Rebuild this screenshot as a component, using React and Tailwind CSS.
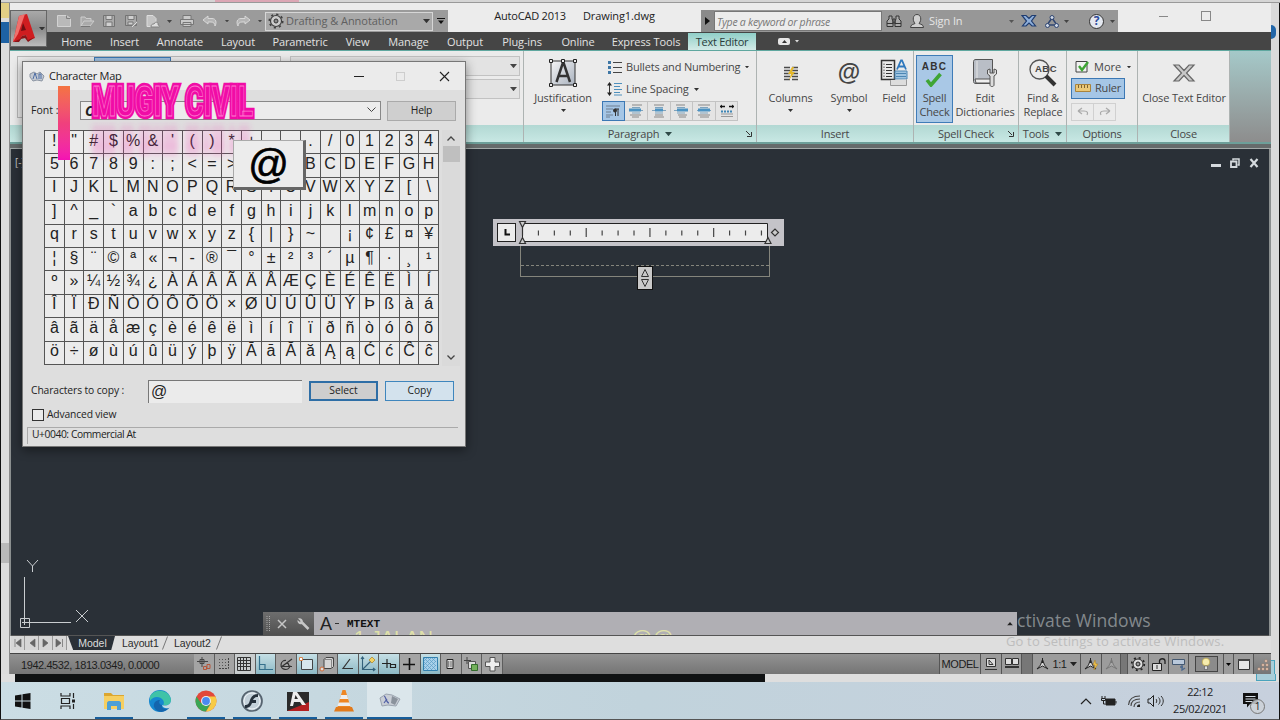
import React from "react";

const tabs = [
  { name: "Home", width: "w-[49px]" },
  { name: "Insert", width: "w-[47px]" },
  { name: "Annotate", width: "w-[64px]" },
  { name: "Layout", width: "w-[52px]" },
  { name: "Parametric", width: "w-[72px]" },
  { name: "View", width: "w-[43px]" },
  { name: "Manage", width: "w-[59px]" },
  { name: "Output", width: "w-[54px]" },
  { name: "Plug-ins", width: "w-[60px]" },
  { name: "Online", width: "w-[52px]" },
  { name: "Express Tools", width: "w-[84px]" },
];

// Printable characters in the order the character map lists them
const codes = [];
for (let i = 33; i < 127; i++) codes.push(i);
for (let i = 160; i < 266; i++) codes.push(i);
const characters = codes.map((c) => (c === 173 ? "-" : String.fromCharCode(c)));

const Icon = ({ w = 20, h = 20, className = "", children }) => (
  <svg
    width={w}
    height={h}
    viewBox={`0 0 ${w} ${h}`}
    fill="none"
    className={`shrink-0 ${className}`}
  >
    {children}
  </svg>
);

const Caret = ({ className = "text-[#444]", size = 5 }) => (
  <svg width={size} height={size * 0.6} viewBox="0 0 10 6" className={`shrink-0 ${className}`}>
    <path d="M0 0h10L5 6z" fill="currentColor" />
  </svg>
);

const Cell = ({ width, className = "", children }) => (
  <div className={`flex h-full shrink-0 items-center justify-center ${width} ${className}`}>{children}</div>
);

const QuickAccess = () => (
  <div className="flex h-[22px] w-[401px] items-center bg-[#9b9b9b] pl-[6px]">
    <Cell width="w-[22px]">
      <Icon w={16} h={14}><path d="M1.500 1.500h9l4 3v8h-13z" fill="#b9b9b9" stroke="#d2d2d2" /><path d="M10.500 1.500v3h4" stroke="#808080" /></Icon>
    </Cell>
    <Cell width="w-[23px]">
      <Icon w={16} h={14}><path d="M2 12V3h4l1 1.500h5V7M2 12l3-5h10l-4 5z" fill="#aaa" stroke="#cdcdcd" /><path d="M2 12.500h9" stroke="#777" /></Icon>
    </Cell>
    <Cell width="w-[22px]">
      <Icon w={16} h={14}><path d="M2.500 1.500h11v11h-11z" fill="#aaa" stroke="#737373" /><path d="M5 1.500h6v4H5zM5 8h6v4.500H5z" fill="#d0d0d0" stroke="#777" /></Icon>
    </Cell>
    <Cell width="w-[22px]">
      <Icon w={16} h={15}><path d="M2.500 1.500h11v10h-11z" fill="#aaa" stroke="#737373" /><path d="M5 1.500h6v4H5zM5 8h5v3H5z" fill="#d0d0d0" stroke="#777" /><path d="M8 13l6-6 1 1-6 6z" fill="#ddd" stroke="#777" strokeWidth=".5" /></Icon>
    </Cell>
    <Cell width="w-[22px]">
      <Icon w={16} h={15}><path d="M2 1.500h6l3 3v8H2z" fill="#c4c4c4" stroke="#ddd" /><path d="M6 13c0-3 2-3 3-3 1-3 5-2 4 1 2 0 2 2 1 2z" fill="#ddd" stroke="#808080" /></Icon>
    </Cell>
    <Cell width="w-[11px]"><Caret /></Cell>
    <Cell width="w-[24px]">
      <Icon w={16} h={14}><path d="M4 5V1.500h8V5M1.500 5.500h13v5h-13zM4 8.500h8v4H4z" fill="#c9c9c9" stroke="#777" /></Icon>
    </Cell>
    <Cell width="w-[22px]">
      <Icon w={16} h={13}><path d="M1 5l5-4v2.500h4c4 0 5 4 3 7.500 0-3-2-4-4-4H6V9z" fill="#b5b5b5" stroke="#ddd" strokeWidth=".9" /></Icon>
    </Cell>
    <Cell width="w-[11px]"><Caret size={4} /></Cell>
    <Cell width="w-[22px]">
      <Icon w={16} h={13}><path d="M15 5l-5-4v2.500H6C2 3.500 1 7.500 3 11c0-3 2-4 4-4h3V9z" fill="#b5b5b5" stroke="#ddd" strokeWidth=".9" /></Icon>
    </Cell>
    <Cell width="w-[11px]"><Caret size={4} /></Cell>
    <div className="flex h-[19px] w-[168px] items-center border border-[#d6d6d6] bg-[#a9a9a9] px-[2px]">
      <Icon w={16} h={16}>
        <circle cx="8" cy="8" r="5.500" fill="#ccc" stroke="#3f3f3f" strokeWidth="1.200" />
        <circle cx="8" cy="8" r="6.800" stroke="#3f3f3f" strokeWidth="1.500" strokeDasharray="2.200 3.140" />
        <circle cx="8" cy="8" r="2" fill="#8b8b8b" stroke="#333" />
      </Icon>
      <span className="ml-[2px] text-[11px] tracking-[-0.04px] text-[#606060]">Drafting &amp; Annotation</span>
      <div className="grow" />
      <Caret size={7} className="text-[#333]" />
    </div>
    <Cell width="w-[15px]">
      <Icon w={8} h={8}><path d="M0 1.500h8" stroke="#111" /><path d="M1 3.500h6L4 7z" fill="#111" /></Icon>
    </Cell>
  </div>
);

const InfoCenter = () => (
  <div className="flex h-[22px] w-[417px] items-center bg-[#979797]">
    <Cell width="w-[13px]" className="bg-[#8a8a8a]">
      <Icon w={5} h={8}><path d="M0 0l5 4-5 4z" fill="#111" /></Icon>
    </Cell>
    <div className="flex h-[20px] w-[168px] items-center border border-[#777] bg-[#ececec] pl-[2px] pt-[3px]">
      <span className="whitespace-nowrap text-[10.500px] italic tracking-[-0.250px] text-[#777]">Type a keyword or phrase</span>
    </div>
    <Cell width="w-[24px]">
      <Icon w={16} h={16}><path d="M3 3h3v3l1 2v5.500H1V8l2-2zM10 3h3v3l2 2v5.500H9V8l1-2zM7 6h2v4H7z" fill="#aaa" stroke="#333" /><path d="M1 10.500h6M9 10.500h6" stroke="#333" /></Icon>
    </Cell>
    <Cell width="w-[21px]">
      <Icon w={16} h={16}><path d="M1.500 14.500c0-3 3-3 4.500-4C3 7 4 1.500 8 1.500S13 7 10 10.500c2 1 4.500 1 4.500 4z" fill="#d0d0d0" stroke="#444" /></Icon>
    </Cell>
    <span className="ml-[2px] w-[76px] text-[11px] tracking-[-0.1px] text-[#e6e6e6]">Sign In</span>
    <Cell width="w-[12px]"><Caret size={5} className="text-[#555]" /></Cell>
    <Cell width="w-[24px]">
      <Icon w={16} h={14}><path d="M1 1.500h4l3 3 3-3h3.500L10.500 7l4 5H11L8 9l-3 3H1.500l4-5z" fill="#8fb0db" stroke="#1f3c70" strokeWidth="1.200" /></Icon>
    </Cell>
    <Cell width="w-[21px]">
      <Icon w={16} h={15}><path d="M8 4l-5 7h10z" stroke="#2f4571" strokeWidth="1.500" /><circle cx="8" cy="3.500" r="2" fill="#cfd8e6" stroke="#2f4571" /><circle cx="3.500" cy="11.500" r="2" fill="#cfd8e6" stroke="#2f4571" /><circle cx="12.500" cy="11.500" r="2" fill="#cfd8e6" stroke="#2f4571" /></Icon>
    </Cell>
    <Cell width="w-[9px]"><Caret size={5} className="text-[#444]" /></Cell>
    <Cell width="w-[46px]" className="pl-[16px]">
      <div className="flex size-[15px] shrink-0 items-center justify-center rounded-full border border-[#333] bg-[#e4e8f0] text-[12px] font-bold leading-none text-[#2b4a9b]">?</div>
      <Caret size={5} className="ml-[6px] text-[#444]" />
    </Cell>
  </div>
);

const TitleBar = () => (
  <div className="flex h-[29px] bg-[#ececec] pt-[7px]">
    <div className="w-[37px]" />
    <QuickAccess />
    <div className="flex w-[253px] items-center justify-center gap-[17px] pb-[9px] text-[11px] text-[#222]">
      <span className="tracking-[-0.2px]">AutoCAD 2013</span>
      <span className="tracking-[-0.1px]">Drawing1.dwg</span>
    </div>
    <InfoCenter />
    <div className="ml-[41px] mt-[6px] h-px w-[9px] bg-[#888]" />
    <div className="ml-[33px] mt-[1px] size-[10px] border border-[#888]" />
  </div>
);

const MenuTabs = () => (
  <div className="flex h-[18px] items-end bg-[#454545] pl-[42px] text-[11px] tracking-[-0.1px] text-[#e2e2e2]">
    {tabs.map((tab) => (
      <div key={tab.name} className={`flex h-[16px] shrink-0 items-center justify-center whitespace-nowrap ${tab.width}`}>{tab.name}</div>
    ))}
    <div className="flex h-[17px] w-[68px] shrink-0 items-center justify-center whitespace-nowrap bg-gradient-to-b from-[#8fcfc8] to-[#d3eae7] pt-[1px] tracking-[-0.250px] text-[#2c3c3b]">Text Editor</div>
    <div className="ml-[22px] flex h-[17px] items-center gap-[5px]">
      <div className="flex h-[7px] w-[12px] items-center justify-center rounded-[2px] bg-[#e6e6e6]"><Caret size={5} className="rotate-180 text-[#333]" /></div>
      <Caret size={4} className="text-[#ddd]" />
    </div>
  </div>
);

const Panel = ({ title, width, arrow, launcher, children }) => (
  <div className={`flex shrink-0 flex-col border-r border-[#adb3b2] ${width}`}>
    <div className="flex h-[74px] bg-[#ebebeb]">{children}</div>
    <div className="flex h-[17px] items-center bg-gradient-to-b from-[#b2d8d3] to-[#c8e8e4] pt-[1px]">
      <div className={launcher || !arrow ? "w-[10px]" : "w-[4px]"} />
      <div className="flex grow items-center justify-center gap-[6px] whitespace-nowrap tracking-[-0.2px]">
        {title}
        {arrow && <Caret size={7} className="text-[#2f4a48]" />}
      </div>
      <div className={launcher || !arrow ? "w-[10px]" : "w-[4px]"}>
        {launcher && <Icon w={6} h={6}><path d="M0 0l4 4M5.500 1v4.500H1" stroke="#333" /></Icon>}
      </div>
    </div>
  </div>
);

const BigButton = ({ width, icon, lines, arrow, active }) => (
  <div className={`mt-[4px] flex h-[68px] shrink-0 flex-col items-center ${width} ${active ? "border border-[#3f7cb8] bg-[#a9c8e6]" : "border border-transparent"}`}>
    <div className="flex h-[35px] items-center justify-center">{icon}</div>
    {lines.map((line) => (
      <div key={line} className="h-[14px] whitespace-nowrap leading-[14px] tracking-[-0.150px]">{line}</div>
    ))}
    {arrow && <Caret className="mt-[4px] text-[#333]" />}
  </div>
);

const JustifyIcon = () => (
  <Icon w={30} h={30}>
    <defs>
      <linearGradient id="just" x1="0" y1="0" x2="1" y2="1"><stop stopColor="#f5f5f5" /><stop offset="1" stopColor="#a9b2bf" /></linearGradient>
    </defs>
    <path d="M3 3h24v24H3z" fill="url(#just)" stroke="#333" />
    <path d="M8.500 24l6-18h1.500l6 18M10.500 18h10" stroke="#333" strokeWidth="2.500" />
    <path d="M1.500 1.500h3v3h-3zM13.500 1.500h3v3h-3zM25.500 1.500h3v3h-3zM1.500 25.500h3v3h-3zM25.500 25.500h3v3h-3z" fill="#eee" stroke="#222" />
  </Icon>
);

const AlignButtons = () => (
  <div className="flex h-[20px] w-[136px]">
    <div className="flex w-[23px] items-center justify-center border border-[#3c78b4] bg-[#a5c6e6]">
      <Icon w={16} h={14}><path d="M1 2h14M1 5h7M1 8h5M1 11h7M1 13h4" stroke="#6f7f90" /><path d="M10.500 12V5M13 12V5M10 5h4" stroke="#333" /><circle cx="10" cy="6.500" r="2" fill="#333" /></Icon>
    </div>
    {[["M4 2h10M2 12h11M4 14h7", 1, 12], ["M3 2h10M4 12h8M3 14h10", 4, 8], ["M3 2h9M5 12h9M6 14h7", 4, 11], ["M2 2h12M2 12h12M4 14h9", 2, 12]].map(([d, x, w]) => (
      <div key={d} className="flex w-[23px] items-center justify-center border-y border-r border-[#c3c3c3] bg-[#e4e4e4]">
        <Icon w={16} h={16}><path d={d} stroke="#888" /><path d="M4 4.500h8M1 7.500h14M4 10h8" stroke="#7fa3bd" /><path d={`M${x} 5.500h${w}v3H${x}z`} fill="#4b93c3" /></Icon>
      </div>
    ))}
    <div className="flex w-[22px] items-center justify-center border-y border-r border-[#c3c3c3] bg-[#e4e4e4]">
      <Icon w={14} h={14}><path d="M0 2.500h5M9 2.500h5" stroke="#111" strokeWidth="1.500" /><path d="M2 .500v4L0 2.500zM12 .500v4l2-2z" fill="#111" /><path d="M1 7.500h12" stroke="#3f86b5" strokeWidth="2" strokeDasharray="2 1" /><path d="M1 10h12M1 12.500h12" stroke="#999" /></Icon>
    </div>
  </div>
);

const Ribbon = () => (
  <div className="flex h-[94px] border-b-2 border-t border-b-[#6d9f99] border-t-[#5fa79f] bg-gradient-to-b from-[#a5c9c9] to-[#8d8d8d] text-[11px] text-[#474747]">
    <Panel title="" width="w-[514px]">
      <div className="flex w-full justify-between pt-[5px]">
        <div className="ml-[7px] flex h-[62px] w-[264px] border border-[#b8b8b8] pl-[76px]">
          <div className="h-[30px] w-[77px] border border-[#3c78b4] bg-[#9fbfdf]" />
        </div>
        <div className="mr-[3px] flex w-[230px] flex-col gap-[3px]">
          {["font", "color"].map((k) => (
            <div key={k} className="flex h-[20px] items-center justify-end border border-[#c2c2c2] bg-[#e3e3e3] pr-[2px]"><Caret size={7} /></div>
          ))}
        </div>
      </div>
    </Panel>
    <Panel title="Paragraph" width="w-[233px]" arrow launcher>
      <BigButton width="w-[78px]" icon={<JustifyIcon />} lines={["Justification"]} arrow />
      <div className="flex flex-col pt-[5px]">
        <div className="flex h-[22px] items-center">
          <Icon w={16} h={14} className="ml-[5px]"><path d="M1 1h3v3H1zM1 6h3v3H1zM1 11h3v3H1z" fill="#3e76a5" /><path d="M6 2.500h9M6 7.500h9M6 12.500h9" stroke="#444" strokeWidth="1.200" /></Icon>
          <span className="ml-[3px] mr-[5px] whitespace-nowrap tracking-[-0.180px]">Bullets and Numbering</span>
          <Caret size={4} className="text-[#333]" />
        </div>
        <div className="flex h-[23px] items-center">
          <Icon w={16} h={14} className="ml-[5px]"><path d="M2.500 2v10" stroke="#333" /><path d="M0 3.500h5L2.500 0zM0 10.500h5L2.500 14z" fill="#222" /><path d="M7 1.500h8M7 4.500h6M7 7.500h8M7 10.500h6M7 13h8" stroke="#4e90bd" /></Icon>
          <span className="ml-[3px] mr-[5px] whitespace-nowrap tracking-[-0.1px]">Line Spacing</span>
          <Caret size={5} className="text-[#333]" />
        </div>
        <AlignButtons />
      </div>
    </Panel>
    <Panel title="Insert" width="w-[157px]">
      <BigButton
        width="w-[67px]"
        lines={["Columns"]}
        arrow
        icon={<Icon w={16} h={16} className="mt-[2px]"><path d="M1 1.500h6M1 4.500h6M1 7.500h6M1 10.500h6M1 13.500h6M9 1.500h6M9 4.500h6M9 7.500h6M9 10.500h6M9 13.500h6" stroke="#4a4a4a" strokeWidth="1.500" /><path d="M9 1L5 8h3l-2 6 6-8H9l2-5z" fill="#e5b829" /></Icon>}
      />
      <BigButton width="w-[50px]" lines={["Symbol"]} arrow icon={<span className="pb-[2px] text-[23px] font-bold leading-none text-[#444] [font-family:'Liberation_Sans',sans-serif]">@</span>} />
      <BigButton
        width="w-[40px]"
        lines={["Field"]}
        icon={<Icon w={28} h={28}><path d="M1.500 1.500h13v19h-13z" fill="#e8e8e8" stroke="#333" strokeWidth="1.500" /><path d="M4 4.500v14" stroke="#555" strokeDasharray="1.500 1.500" /><path d="M6 5.500h6M6 8.500h6M6 11.500h6M6 14.500h6M6 17.500h6" stroke="#333" /><path d="M17 10.500l4-9h1l4 9M18 7.500h6.500" stroke="#2f78bd" strokeWidth="1.800" /><path d="M15 12h12v8H15z" fill="#9fc4e0" stroke="#4c86b3" /><path d="M10.500 21v5.500h16v-6" fill="#ddd" stroke="#999" /><path d="M16 14.500h10M16 17.500h10" stroke="#4c86b3" /></Icon>}
      />
    </Panel>
    <Panel title="Spell Check" width="w-[105px]" launcher>
      <BigButton
        width="ml-[2px] w-[37px]"
        active
        lines={["Spell", "Check"]}
        icon={
          <div className="flex flex-col items-center pt-[3px]">
            <span className="text-[10px] font-bold leading-[10px] tracking-[1.200px] text-[#333] [font-family:'Liberation_Sans',sans-serif]">ABC</span>
            <Icon w={18} h={15}><path d="M2 8l4 5L15.500 2" stroke="#3fa535" strokeWidth="3.600" /></Icon>
          </div>
        }
      />
      <BigButton
        width="w-[64px]"
        lines={["Edit", "Dictionaries"]}
        icon={<Icon w={26} h={30}><path d="M4 1.500h16.500v24H4c-2 0-2.500-1-2.500-2v-20c0-1 .5-2 2.500-2z" fill="#b9bec6" stroke="#555" /><path d="M3 21h17v4H4z" fill="#efefef" stroke="#555" /><path d="M5 3v17" stroke="#e5e5e5" /><path d="M15.500 12v4l2.500 2v9c0 2 4 2 4 0v-9l2.500-2v-4l-2.500-1v4h-4v-4z" fill="#ddd" stroke="#555" /></Icon>}
      />
    </Panel>
    <Panel title="Tools" width="w-[48px]" arrow>
      <BigButton
        width="w-[48px]"
        lines={["Find &", "Replace"]}
        icon={
          <div className="relative">
            <Icon w={30} h={30}><circle cx="11.500" cy="11.500" r="9.500" fill="#ececec" stroke="#555" strokeWidth="1.300" /><path d="M18 18l9 9" stroke="#333" strokeWidth="4" /></Icon>
            <span className="absolute left-[7px] top-[6px] text-[9.500px] font-bold leading-none tracking-[.5px] text-[#444] [font-family:'Liberation_Sans',sans-serif]">ABC</span>
          </div>
        }
      />
    </Panel>
    <Panel title="Options" width="w-[71px]">
      <div className="flex flex-col pl-[4px] pt-[5px]">
        <div className="flex h-[22px] items-center">
          <Icon w={15} h={13} className="ml-[4px]"><path d="M1 1.500h11v10.500H1z" fill="#f2f2f2" stroke="#444" /><path d="M4 6l3 4 6-8" stroke="#3fa535" strokeWidth="2.400" /></Icon>
          <span className="ml-[4px] mr-[6px]">More</span>
          <Caret size={4} className="text-[#333]" />
        </div>
        <div className="flex h-[21px] w-[54px] items-center border border-[#3c78b4] bg-[#a5c6e6]">
          <Icon w={16} h={9} className="ml-[3px]"><path d="M.5.500h15v7H.500z" fill="#eac878" stroke="#a9833c" /><path d="M3.500 1v3M6.500 1v3M9.500 1v3M12.500 1v3" stroke="#7c6334" /></Icon>
          <span className="ml-[4px] tracking-[-0.2px]">Ruler</span>
        </div>
        <div className="mt-[4px] flex h-[18px]">
          <div className="flex w-[23px] items-center justify-center border border-[#d0d0d0]"><Icon w={12} h={9}><path d="M1 4l4-3M1 4l4 3M1 4h6c4 0 4 2 3 4" stroke="#aaa" strokeWidth="1.200" /></Icon></div>
          <div className="flex w-[22px] items-center justify-center border border-l-0 border-[#d0d0d0]"><Icon w={12} h={9}><path d="M11 4L7 1M11 4L7 7M11 4H5C1 4 1 6 2 8" stroke="#aaa" strokeWidth="1.200" /></Icon></div>
        </div>
      </div>
    </Panel>
    <Panel title="Close" width="w-[92px]">
      <BigButton
        width="w-[92px]"
        lines={["Close Text Editor"]}
        icon={<Icon w={24} h={20}><path d="M2 2h5l5 5.500L17 2h5l-7.500 8 7.500 8h-5l-5-5.500L7 18H2l7.500-8z" fill="#c9c9c9" stroke="#666" strokeWidth="1.200" /></Icon>}
      />
    </Panel>
  </div>
);

const CharacterMap = () => (
  <div className="absolute left-[22px] top-[61px] flex h-[386px] w-[444px] flex-col border border-[#777] bg-[#dedede] text-[10.300px] text-[#222] shadow-[0_3px_10px_rgba(0,0,0,0.45)] [font-family:'Open_Sans',sans-serif]">
    <div className="flex h-[28px] items-center bg-[#ebebeb] pl-[6px]">
      <Icon w={16} h={13}><path d="M1 4l4-2 3 2 3-2 4 4-2 5-5-1-4 1-3-4z" fill="#c3c9d2" stroke="#8c95a3" /><path d="M4 9l2-6 2 6M10 4v5M10 4h2v5" stroke="#4f6ea5" /></Icon>
      <span className="ml-[4px] text-[11px] tracking-[-0.250px]">Character Map</span>
      <div className="grow" />
      <div className="h-px w-[10px] bg-[#222]" />
      <div className="ml-[32px] size-[9px] border border-[#cdcdcd]" />
      <Icon w={11} h={11} className="ml-[34px] mr-[15px]"><path d="M1 1l9 9M10 1l-9 9" stroke="#222" strokeWidth="1.100" /></Icon>
    </div>
    <div className="mt-[9px] flex h-[22px] items-center pl-[8px]">
      <span className="w-[49px] pt-[1px] text-[10.500px]">Font :</span>
      <div className="flex h-[19px] w-[301px] items-center justify-between border border-[#888] bg-[#ececec] px-[4px]">
        <span className="text-[14px] font-bold italic">O</span>
        <Icon w={9} h={6}><path d="M.5.500l4 4 4-4" stroke="#444" /></Icon>
      </div>
      <div className="ml-[6px] mt-[1px] flex h-[20px] w-[69px] items-center justify-center border border-[#aaa] bg-[#cfcfcf] tracking-[-0.2px]">Help</div>
    </div>
    <div className="mt-[9px] flex h-[236px] pl-[21px]">
      <div className="grid h-[235px] w-[395px] grid-cols-20 grid-rows-10 border-l border-t border-[#555] bg-[#ebebeb] text-[16px] text-[#222] [font-family:'Liberation_Sans',sans-serif]">
        {characters.map((ch, i) => (
          <div key={i} className="flex items-center justify-center border-b border-r border-[#555] pb-[3px] leading-none">{ch}</div>
        ))}
      </div>
      <div className="ml-[3px] flex w-[18px] flex-col items-center bg-[#dadada] pt-[6px]">
        <Icon w={8} h={5}><path d="M.5 4.500L4 1l3.500 3.500" stroke="#444" strokeWidth="1.300" /></Icon>
        <div className="mt-[5px] h-[16px] w-[17px] bg-[#bfbfbf]" />
        <div className="grow" />
        <Icon w={8} h={5} className="mb-[6px]"><path d="M.5.500L4 4 7.500.500" stroke="#444" strokeWidth="1.300" /></Icon>
      </div>
    </div>
    <div className="mt-[13px] flex h-[24px] items-center pl-[8px]">
      <span className="w-[117px] whitespace-nowrap tracking-[-0.1px]">Characters to copy :</span>
      <div className="flex h-[23px] w-[154px] items-center border-l border-t border-[#777] bg-[#ebebeb] pl-[2px] text-[16px] [font-family:'Liberation_Sans',sans-serif]">@</div>
      <div className="ml-[7px] flex h-[20px] w-[69px] items-center justify-center border-2 border-[#2e6ea6] bg-[#cecece]">Select</div>
      <div className="ml-[7px] flex h-[20px] w-[69px] items-center justify-center border border-[#3f86bd] bg-[#d3e2ed]">Copy</div>
    </div>
    <div className="mt-[3px] flex h-[17px] items-center pl-[9px]">
      <div className="size-[12px] border border-[#333] bg-[#ebebeb]" />
      <span className="ml-[3px] tracking-[-0.150px]">Advanced view</span>
    </div>
    <div className="ml-[4px] mt-[4px] flex h-[17px] w-[431px] items-center border-l border-t border-[#aaa] pb-[2px] pl-[4px] tracking-[-0.430px]">U+0040: Commercial At</div>
  </div>
);

// Enlarged preview of the selected glyph
const Magnifier = () => (
  <div className="absolute left-[233px] top-[140px] flex h-[50px] w-[73px] items-center justify-center border-b-[3px] border-l border-r-[3px] border-t border-b-[#666] border-l-[#aaa] border-r-[#666] border-t-[#aaa] bg-[#ececec] pb-[1px] text-[40px] leading-none text-black [-webkit-text-stroke:0.7px_black] [font-family:'Liberation_Sans',sans-serif]">@</div>
);

// x and width of every letter's glow under the banner
const glow = [[34, 24], [62, 14], [80, 14], [96, 6], [104, 16], [127, 15], [145, 6], [153, 14], [171, 6], [180, 12]];

const Watermark = () => (
  <div className="absolute left-[58px] top-[78px]">
    <div className="absolute left-0 top-[8px] h-[74px] w-[12px] bg-gradient-to-b from-[#f4733f] via-[#f0407c] to-[#f410b4]" />
    <svg width="210" height="90" className="absolute left-0 top-0">
      <defs>
        <linearGradient id="fade" x1="0" y1="0" x2="0" y2="1"><stop stopColor="#f03cb0" stopOpacity=".12" /><stop offset=".7" stopColor="#f03cb0" stopOpacity=".28" /><stop offset="1" stopColor="#f03cb0" stopOpacity=".08" /></linearGradient>
        <filter id="soft"><feGaussianBlur stdDeviation="2.500" /></filter>
      </defs>
      <g fill="url(#fade)" filter="url(#soft)">
        {glow.map(([x, w]) => (
          <rect key={x} x={x} y="46" width={w} height="34" />
        ))}
      </g>
      <g fontFamily="Roboto, sans-serif" fontWeight="700" fontSize="42" strokeLinejoin="miter" strokeMiterlimit="3">
        <text x="34" y="38" textLength="161" lengthAdjust="spacingAndGlyphs" fill="#f00ca6" stroke="#f00ca6" strokeWidth="6.500" paintOrder="stroke">MUGIY CIVIL</text>
      </g>
      <g fontFamily="Roboto, sans-serif" fontWeight="700" fontSize="42">
        <text x="34" y="38" textLength="161" lengthAdjust="spacingAndGlyphs" fill="none" stroke="#ff7fd0" strokeWidth=".8">MUGIY CIVIL</text>
      </g>
    </svg>
  </div>
);

const ticks = Array.from({ length: 15 }, (_, i) => i + 1);

// Ruler, text frame and height grip of the multiline text editor
const TextRuler = () => (
  <div className="absolute left-[482px] top-[70px] w-[291px]">
    <div className="flex h-[27px] items-center bg-[#c4c3c8] pl-[4px]">
      <div className="flex h-[19px] w-[19px] items-center justify-center border border-[#222] bg-[#ececec]">
        <Icon w={6} h={7}><path d="M1.500 0v5.500H6" stroke="#111" strokeWidth="2" /></Icon>
      </div>
      <svg width="262" height="27" className="ml-[2px]">
        <path d="M4.500 4.500h245v18h-245z" fill="#ececec" stroke="#222" />
        {ticks.map((n) => {
          const major = n % 4 === 0;
          return <path key={n} d={`M${4.500 + n * 15.930} ${major ? 9 : 11.500}v${major ? 9 : 5}`} stroke="#444" strokeWidth="1.200" />;
        })}
        <path d="M1.500 2.500h6l-3 6zM4.500 8.500v8M1.500 24.500h6l-3-6zM247 24.500h6l-3-6zM253.500 13.500l3.500-3.500 3.500 3.500-3.500 3.500z" fill="#ccc" stroke="#333" strokeWidth="1.200" />
      </svg>
    </div>
    <div className="ml-[27px] h-[31px] w-[250px] border border-t-0 border-[#85857c]">
      <div className="h-[20px] border-b border-dashed border-[#85857c]" />
    </div>
    <div className="absolute left-[144px] top-[47px] flex h-[24px] w-[16px] items-center justify-center border border-[#111] bg-[#c9c9c9]">
      <Icon w={10} h={20}><path d="M1.500 8.500h7L5 1.500zM1.500 11.500h7L5 18.500z" stroke="#333" /></Icon>
    </div>
  </div>
);

const Canvas = () => (
  <div className="relative ml-px h-[488px] w-[1258px] overflow-hidden border-b border-[#555] bg-[#2a3037]">
    <span className="absolute left-[4px] top-[6px] text-[10px] text-[#ccc]">[-]</span>
    <div className="absolute right-[10px] top-[9px] flex items-center gap-[9px]">
      <div className="mt-[6px] h-[3px] w-[10px] bg-[#d5dade]" />
      <Icon w={10} h={10}><path d="M3 2.500V1h6v6H7.500" stroke="#d5dade" strokeWidth="1.500" /><path d="M1 3.500h5.500V9H1z" stroke="#d5dade" strokeWidth="1.800" /></Icon>
      <Icon w={10} h={10}><path d="M1.500 1l7 8M8.500 1l-7 8" stroke="#d5dade" strokeWidth="2.200" /></Icon>
    </div>
    <TextRuler />
    <svg width="90" height="90" className="absolute left-0 top-[400px]" fill="none" stroke="#c9cdd0">
      <path d="M13.500 28v45M16 73.500h44M9.500 69.500h9v9h-9zM11 73.500h5.500M13.500 71v5" />
      <path d="M16 11l5.500 6 5.500-6M21.500 17v6M65 61l12 12M77 61l-12 12" />
    </svg>
    <div className="absolute left-[252px] top-[463px] flex h-[24px] w-[754px] overflow-hidden">
      <div className="flex w-[51px] items-center bg-gradient-to-b from-[#6e6e6e] to-[#4f4f4f]">
        <Icon w={6} h={18} className="ml-[3px]"><path d="M1 1v16M3.500 1v16" stroke="#aaa" strokeDasharray="1 1" /></Icon>
        <Icon w={10} h={10} className="ml-[5px]"><path d="M1 1l8 8M9 1L1 9" stroke="#c6c6c6" strokeWidth="1.500" /></Icon>
        <Icon w={14} h={14} className="ml-[9px]"><path d="M6 5.500l6.500 6.500" stroke="#c6c6c6" strokeWidth="2.500" /><path d="M2 1.500L4.500 4 4 5 1.500 3c-.5 3 2 5 4.500 4L7 5C7 2 4.500.5 2 1.500z" fill="#c6c6c6" /></Icon>
      </div>
      <div className="relative flex grow items-center overflow-hidden bg-[#b0afb4] pl-[6px] text-[#222]">
        <span className="text-[18px] leading-none [font-family:'Liberation_Sans',sans-serif]">A</span>
        <span className="ml-[3px] w-[4px] border-t border-[#333]" />
        <span className="ml-[8px] text-[11px] font-bold text-[#111] [font-family:'Liberation_Mono',monospace]">MTEXT</span>
        <span className="absolute left-[40px] top-[16px] whitespace-pre text-[20px] leading-none text-[#dfe0a8] [font-family:'Liberation_Sans',sans-serif]">1 JALAN</span>
        <span className="absolute left-[317px] top-[15px] text-[21px] leading-none text-[#dfe0a8] [font-family:'Liberation_Sans',sans-serif]">@@</span>
        <div className="grow" />
        <Caret size={6} className="mr-[4px] rotate-180 text-[#222]" />
      </div>
    </div>
  </div>
);

const LayoutTabs = () => (
  <div className="flex h-[17px] bg-[#dedede] text-[10.500px] text-[#2c2c2c] [font-family:'Liberation_Sans',sans-serif]">
    <div className="flex h-[14px] w-[58px] pl-[1px]">
      {["M3 1v8M9 1v8L4 5z", "M9 1v8L4 5z", "M3 1v8l5-4z", "M2 1v8l5-4zM8.500 1v8"].map((d) => (
        <div key={d} className="flex w-[14px] items-center justify-center border-r border-[#999] bg-[#d6d6d6]"><Icon w={11} h={10}><path d={d} fill="#666" stroke="#666" strokeWidth=".7" /></Icon></div>
      ))}
    </div>
    <div className="flex h-[14px] w-[47px] shrink-0 items-center justify-center bg-[#2a3037] pl-[2px] pt-[2px] text-[#dcdcdc] [clip-path:polygon(0_0,100%_0,92%_100%,11%_100%)]">Model</div>
    <div className="flex h-[14px] items-center">
      <span className="ml-[7px] w-[37px] whitespace-nowrap pt-[2px] tracking-[-0.1px]">Layout1</span>
      <Icon w={7} h={14} className="ml-[3px]"><path d="M.5 13.500l5-13" stroke="#777" /></Icon>
      <span className="ml-[5px] w-[38px] whitespace-nowrap pt-[2px] tracking-[-0.1px]">Layout2</span>
      <Icon w={7} h={14} className="ml-[4px]"><path d="M.5 13.500l5-13" stroke="#777" /></Icon>
    </div>
  </div>
);

const toggles = [
  { on: false, icon: <><path d="M7 1v10M2 5.500h11M5 3.500h4v4H5z" stroke="#444" /><path d="M8.500 10.500h3v3h-3zM12 8.500h3v4h-3z" stroke="#b5573a" /></> },
  { on: false, icon: <><path d="M3 3.500h8M3 6.500h8M3 9.500h8" stroke="#555" strokeDasharray="1 2" /><path d="M3 12.500h9.500V2" stroke="#444" strokeDasharray="2 1" /></> },
  { on: true, light: true, icon: <path d="M1.500 1.500h13v13h-13zM4.500 1v13M7.500 1v13M10.500 1v13M1 4.500h13M1 7.500h13M1 10.500h13" stroke="#333" /> },
  { on: true, icon: <path d="M2.500 0v13.500H16M3 8.500h5v5" stroke="#35708c" strokeWidth="1.200" /> },
  { on: false, icon: <path d="M8 4.500a4.500 4.500 0 104 5M14 3L4 10.500h10M9.500 6l2 5" stroke="#333" strokeWidth="1.200" /> },
  { on: true, icon: <><path d="M3.500 3.500h11v10h-11z" fill="#d7e6ec" stroke="#444" /><path d="M1.500 1.500h3v3h-3z" fill="#fff" stroke="#d98650" /></> },
  { on: false, icon: <><path d="M5 3.500l2-2h7.500v9l-2 2H5z" fill="#d5d5d5" stroke="#444" /><path d="M5 3.500h7.500v9M12.500 3.500l2-2" stroke="#888" /><circle cx="3" cy="13" r="2" fill="#ddd" stroke="#d06a35" /></> },
  { on: true, icon: <path d="M11 3L4 12.500h10" stroke="#333" strokeWidth="1.200" /> },
  { on: true, icon: <><path d="M2.500 1v12.500H15M3 13l9-9M1 3l1.500-2L4 3M13 12l2 1.500-2 1.500" stroke="#33617a" strokeWidth="1.100" /><path d="M12 1l3 3-3 3-3-3z" fill="#f2d264" stroke="#b0892e" strokeWidth=".8" /></> },
  { on: true, icon: <path d="M6 3v9M1 7.500h9M9.500 8.500h5v3h-5z" stroke="#222" strokeWidth="1.200" /> },
  { on: false, icon: <path d="M8.500 2v12M2 8.500h12" stroke="#111" strokeWidth="1.600" /> },
  { on: true, icon: <><path d="M1.500 1.500h14v13h-14z" fill="#a8d0ea" stroke="#3380ae" /><path d="M2 5l3-3M2 9l7-7M2 13L13 2M5 14l9-9M9 14l5-5M2 10l4 4M2 6l8 8M2 2l12 12M6 2l8 8M10 2l4 4" stroke="#5c9dc4" strokeWidth=".7" /></> },
  { on: false, icon: <><path d="M5 3.500h6v9H5z" fill="#ddd" stroke="#222" /><path d="M6 6h4M6 8h4M6 10h4" stroke="#333" strokeDasharray="1 .7" /></> },
  { on: false, icon: <><path d="M4 1v7M1 4.500h7" stroke="#444" /><path d="M5.500 5.500h7v7h-7z" fill="#ddd" stroke="#555" /><path d="M8.500 8.500h6v6h-6z" fill="#73b05b" stroke="#346c2c" /></> },
  { on: false, icon: <path d="M6 1.500h5V6h4.500v4.500H11V15H6v-4.500H1.500V6H6z" fill="#eee" stroke="#555" /> },
];

const toggleBg = (t) => {
  if (t.light) return "bg-[#c9cdce]";
  return t.on ? "bg-gradient-to-b from-[#c5dfe5] to-[#8db9c5]" : "bg-[#a4a4a4]";
};

const StatusCell = ({ width, className = "", children }) => (
  <div className={`flex h-full shrink-0 items-center justify-center border-r border-[#555] bg-[#9c9c9c] ${width} ${className}`}>{children}</div>
);

const StatusBar = () => (
  <div className="flex h-[21px] border-t border-[#444] bg-gradient-to-b from-[#929292] to-[#757575] text-[11px] text-[#1d1d1d]">
    <span className="w-[184px] whitespace-nowrap pl-[11px] pt-[1px] leading-[21px] tracking-[-0.420px] [font-family:'Liberation_Sans',sans-serif]">1942.4532, 1813.0349, 0.0000</span>
    <div className="grid h-[20px] w-[309px] grid-cols-15">
      {toggles.map((t, i) => (
        <div key={i} className={`flex items-center justify-center border-r border-[#5d5d5d] ${toggleBg(t)}`}><Icon w={17} h={16}>{t.icon}</Icon></div>
      ))}
    </div>
    <div className="grow border-r border-[#555]" />
    <StatusCell width="w-[41px]" className="text-[11px] tracking-[-0.450px] [font-family:'Liberation_Sans',sans-serif]">MODEL</StatusCell>
    <StatusCell width="w-[21px]"><Icon w={14} h={14}><path d="M2.500 1.500h9v8h-9z" fill="#ddd" stroke="#333" /><path d="M5 3v4.500h4zM1 12.500h12" stroke="#333" /></Icon></StatusCell>
    <StatusCell width="w-[20px]"><Icon w={16} h={14}><path d="M1.500 1.500h6v6h-6zM8.500 1.500h6v6h-6z" fill="#ddd" stroke="#333" /><path d="M1 10h14" stroke="#333" strokeWidth="2" /></Icon></StatusCell>
    <div className="w-[11px] border-r border-[#555] bg-[#777]" />
    <StatusCell width="w-[48px]" className="gap-[3px]">
      <Icon w={13} h={14}><path d="M6.500 1v5M6.500 2.500L4.500 8 1 12l5.500-3 5.500 3-3.500-4z" fill="#ddd" stroke="#222" /></Icon>
      <span className="pt-[1px] tracking-[-0.4px] [font-family:'Liberation_Sans',sans-serif]">1:1</span>
      <Caret size={7} className="text-[#222]" />
    </StatusCell>
    <StatusCell width="w-[21px]"><Icon w={15} h={14}><path d="M6.500 1v5M6.500 2.500L4.500 8 1 12l5.500-3 5.500 3-3.500-4z" fill="#ddd" stroke="#222" /><path d="M11 3l-2 5h2l-1 5 4-6h-2z" fill="#f0c24c" stroke="#a87e20" strokeWidth=".5" /></Icon></StatusCell>
    <StatusCell width="w-[19px]"><Icon w={13} h={14}><path d="M6.500 1v5M6.500 2.500L4.500 8 1 12l5.500-3 5.500 3-3.500-4z" fill="#aaa" stroke="#777" /></Icon></StatusCell>
    <div className="w-[7px] border-r border-[#555] bg-[#777]" />
    <StatusCell width="w-[21px]"><Icon w={16} h={16}><circle cx="8" cy="8" r="5" fill="#ddd" stroke="#222" /><circle cx="8" cy="8" r="6.300" stroke="#222" strokeWidth="1.700" strokeDasharray="2 2.940" /><circle cx="8" cy="8" r="2" fill="#999" stroke="#222" /></Icon></StatusCell>
    <StatusCell width="w-[20px]"><Icon w={16} h={15}><path d="M1.500 6.500h9v7h-9z" fill="#ddd" stroke="#222" /><path d="M8.500 6V4c0-3 5.500-3 5.500 0v3" stroke="#222" strokeWidth="1.300" /><path d="M6 8v4" stroke="#333" /></Icon></StatusCell>
    <StatusCell width="w-[20px]"><Icon w={15} h={15}><path d="M1.500 2.500h12v5h-12z" fill="#b9c8da" stroke="#445870" /><path d="M9 10h3M11 8v5l3-2" stroke="#4a678e" strokeWidth="1.300" /></Icon></StatusCell>
    <StatusCell width="w-[35px]">
      <div className="flex h-[16px] w-[23px] items-center justify-center border border-[#444] bg-[#8b8b8b]">
        <Icon w={10} h={14}><circle cx="5" cy="5" r="3.800" fill="#f7edae" stroke="#bda544" strokeWidth=".7" /><path d="M3.500 9h3v3.500h-3z" fill="#ddd" stroke="#555" strokeWidth=".6" /></Icon>
      </div>
    </StatusCell>
    <StatusCell width="w-[10px]"><Caret className="text-black" /></StatusCell>
    <StatusCell width="w-[20px]"><Icon w={14} h={14}><path d="M1.500 2.500h11v10h-11z" fill="#e5e5e5" stroke="#333" /><path d="M1 3h12" stroke="#444" strokeWidth="2" /></Icon></StatusCell>
    <Cell width="w-[17px]"><Icon w={13} h={13}><path d="M9 2h2v2H9zM6 6h2v2H6zM10 6h2v2h-2zM2 10h2v2H2zM6 10h2v2H6zM10 10h2v2h-2z" fill="#f1e3d6" stroke="#b9876b" strokeWidth=".6" /></Icon></Cell>
  </div>
);

const apps = [
  {
    open: true,
    icon: <><path d="M3 3h7l2 2h11v4H3z" fill="#dba630" /><path d="M3 6h20v13H3z" fill="#f6cf61" /><path d="M6 20v-7c0-1 1-2 2-2h10c1 0 2 1 2 2v7h-4v-4h-6v4z" fill="#4c9fd6" /></>,
  },
  {
    open: false,
    icon: <><circle cx="13" cy="11" r="11" fill="#1688cf" /><path d="M3 6C9-3 23 0 24 10c0 5-5 6-8 5 0 0 2-2 0-5-3-4-10-4-13 1 0-2 0-4 0-5z" fill="#3fc3a7" /><path d="M15 15c-1 4 4 5 8 2-4 6-13 7-16 0-1-5 3-7 6-7-2 3 0 5 2 5z" fill="#1465ad" /><path d="M15 15c3 1 8 1 9-4v6c-3 2-8 2-9-2z" fill="#c6dae4" /></>,
  },
  {
    open: true,
    icon: <><circle cx="13" cy="11" r="10.500" fill="#e2483b" /><path d="M3.500 6.500A10.500 10.500 0 0013 21.500l5-8.500H8z" fill="#3aa655" /><path d="M13 21.500A10.500 10.500 0 0022.500 6.500H13l5 7z" fill="#f7cb45" /><circle cx="13" cy="11" r="5" fill="#eee" /><circle cx="13" cy="11" r="3.900" fill="#4a8af0" /></>,
  },
  {
    open: true,
    icon: <><circle cx="13" cy="11" r="10" fill="#c4d1da" stroke="#56636f" strokeWidth="1.700" /><circle cx="13" cy="11" r="8" stroke="#eef3f6" /><path d="M19 4c-5 0-7 3-8 6-1 4-2 5-5 5v3c4 0 6-2 7-5h4v-3h-3c1-2 2-3 5-3z" fill="#26313c" /></>,
  },
  {
    open: true,
    icon: <><path d="M2 2h22v19H2z" fill="#2b2b2b" /><path d="M2 21l22-9v9z" fill="#b32021" /><path d="M5 16L8 2h4l9 13h-4l-2-3H9l-1 4zM9.500 9h3.500L10.500 5z" fill="#eee" /></>,
  },
  {
    open: true,
    icon: <><path d="M11.500 0h3l5 17h-13z" fill="#ee8623" /><path d="M10 5h6l1.200 4H8.800zM7.500 12.500h11l1 3.500h-13z" fill="#eee" /><path d="M5 17h16l2 4.500H3z" fill="#e27a1b" /></>,
  },
];

const Taskbar = () => (
  <div className="flex h-[38px] border-x border-b border-b-[#555] border-x-[#111] bg-gradient-to-r from-[#cbdde4] via-[#c1d3dc] to-[#c7d0dd]">
    <Cell width="w-[43px]"><Icon w={16} h={16}><path d="M0 2.500L6.500 1.500V7.500H0zM7.500 1.300L15.500 0v7.500h-8zM0 8.500h6.500v6L0 13.500zM7.500 8.500h8V16l-8-1.300z" fill="#111" /></Icon></Cell>
    <Cell width="w-[47px]">
      <Icon w={16} h={16}><path d="M1 0v3h9V0M1 16v-3h9v3M1.500 5.500h8v5h-8zM13.500 0v5M13.500 11v5" stroke="#222" strokeWidth="1.200" /><path d="M12 6.500h3v3h-3z" fill="#222" /></Icon>
    </Cell>
    {apps.map((app, i) => (
      <div key={i} className="flex w-[46px] shrink-0 flex-col items-center">
        <div className="flex h-[35px] items-center pt-[2px]"><Icon w={26} h={22}>{app.icon}</Icon></div>
        {app.open && <div className="h-[2px] w-[38px] bg-[#175e9b]" />}
      </div>
    ))}
    <div className="flex w-[45px] flex-col items-center bg-[#dbe6eb]">
      <div className="flex h-[35px] items-center pt-[1px]"><Icon w={22} h={18}><path d="M1 7l6-4 6 1 8 4-4 7-8-1-6 1z" fill="#c9ced6" stroke="#9aa3af" /><path d="M5 5c2 0 2 7 5 7M8 8l-3 4" stroke="#4f5fa5" strokeWidth="1.200" /><path d="M13 5l6 3-3 6-4-2z" fill="#8a929c" /></Icon></div>
      <div className="h-[2px] w-[45px] bg-[#175e9b]" />
    </div>
    <div className="grow" />
    <div className="flex items-center text-[#1d1d1d]">
      <Icon w={12} h={8} className="mr-[9px]"><path d="M1 7l5-5 5 5" stroke="#222" strokeWidth="1.200" /></Icon>
      <Icon w={16} h={12} className="mr-[10px]"><path d="M5 4h9v6H5z" fill="#222" stroke="#222" /><path d="M15 6v2.500M1 1v2M4 1v2M.5 3.500h4v2h-4zM2.500 6v3h2" stroke="#222" /></Icon>
      <Icon w={14} h={14} className="mr-[6px]"><path d="M1.500 11C2 5 6 2 13 2M4 12c0-4 3-7 9-7M7 13c0-3 2-5 6-5" stroke="#444" strokeWidth="1.100" /><path d="M10 13c0-2 1-2.500 3-2.500V13z" fill="#222" /></Icon>
      <Icon w={17} h={14} className="mr-[8px]"><path d="M1 5h2l3.500-3.500v11L3 9H1z" stroke="#222" /><path d="M9 5c1 1 1 3 0 4M11.500 3.500c2 2 2 5 0 7M14 2c3 3 3 7 0 10" stroke="#333" /></Icon>
      <div className="flex w-[56px] flex-col items-center text-[11px] leading-[16.500px]">
        <span className="tracking-[-0.550px]">22:12</span>
        <span className="tracking-[-0.450px]">25/02/2021</span>
      </div>
      <div className="relative ml-[14px] mr-[15px]">
        <Icon w={22} h={22}><path d="M1 3h15v11H8l-3 3.500V14H1z" fill="#111" /><path d="M3.500 6.500h10M3.500 9h10M3.500 11.500h7" stroke="#d5dde5" /></Icon>
        <div className="absolute left-[8px] top-[9px] flex size-[15px] items-center justify-center rounded-full border border-[#777] bg-[#cdd2d8]/85 text-[10px] leading-none">1</div>
      </div>
    </div>
  </div>
);

const AppButton = () => (
  <div className="absolute left-[10px] top-[10px] flex h-[37px] w-[37px] items-center border border-[#666] bg-gradient-to-b from-[#a9a9a9] via-[#8a8a8a] to-[#bcbcbc]">
    <Icon w={25} h={32} className="ml-[1px]">
      <path d="M7 3l8-2 8 24-7 3-2-6-4 1-2 4-7 2z" fill="#cf1d20" />
      <path d="M7 3l6-2-7 20-5 8z" fill="#f0706c" />
      <path d="M11 10l-2 8 5-1z" fill="#6f0f12" />
      <path d="M1 29l7-3 2-3 4-1 2 5 7-3-7 5-3-4-4 1-2 3z" fill="#8c1316" />
    </Icon>
    <Caret size={6} className="ml-[2px] text-[#333]" />
  </div>
);

const App = () => (
  <div className="relative h-[720px] w-[1280px] overflow-hidden bg-[#dedede] leading-normal [font-family:'Open_Sans','Noto_Sans',sans-serif]">
    <div className="flex h-[682px] flex-col border-l border-[#111]">
      <div className="flex h-[3px] border-b border-[#999] bg-[#d5d5d5] pl-[214px]">
        <div className="w-[84px] bg-[#dca6b4]" />
      </div>
      <div className="flex h-[671px]">
        <div className="flex w-[8px] flex-col bg-[#dcdcdc]">
          <div className="h-[15px] bg-[#e2cf86]" />
          <div className="mt-[4px] h-[21px] bg-[#1e62a4]" />
          <div className="mt-[500px] h-[20px] bg-[#b9b9b9]" />
        </div>
        <div className="w-px bg-[#8a8a8a]" />
        <div className="flex w-[1261px] flex-col bg-[#8b8f8f]">
          <TitleBar />
          <MenuTabs />
          <Ribbon />
          <div className="h-[5px] border-b border-[#a3aaa9] bg-[#666b6b]" />
          <Canvas />
          <LayoutTabs />
          <StatusBar />
        </div>
        <div className="flex w-[9px] flex-col border-r border-[#111] bg-[#dadada] pt-[22px]">
          <div className="h-[14px] w-[5px] rounded-r-full bg-[#2266a8]" />
          <div className="grow" />
          <div className="h-[14px] w-[4px] border-r border-t border-[#4aa3bd] bg-[#a9cdd8]" />
        </div>
      </div>
      <div className="flex h-[8px] justify-between border-r border-[#111] pl-[14px] pr-[3px]">
        <div className="w-[750px] bg-[#101213]" />
        <div className="h-[7px] w-[20px] border border-t-0 border-[#4aa3bd] bg-[#a9cdd8]" />
      </div>
    </div>
    <Taskbar />
    <AppButton />
    <CharacterMap />
    <Watermark />
    <Magnifier />
    <div className="absolute left-[1017px] top-[609px] whitespace-nowrap text-[17.500px] leading-[22px] tracking-[0.080px] text-[#83898d]">ctivate Windows</div>
    <div className="absolute left-[1006px] top-[633px] whitespace-nowrap text-[13px] leading-[17px] tracking-[0.150px] text-[#bdbdbd]">Go to Settings to activate Windows.</div>
  </div>
);

export default App;
